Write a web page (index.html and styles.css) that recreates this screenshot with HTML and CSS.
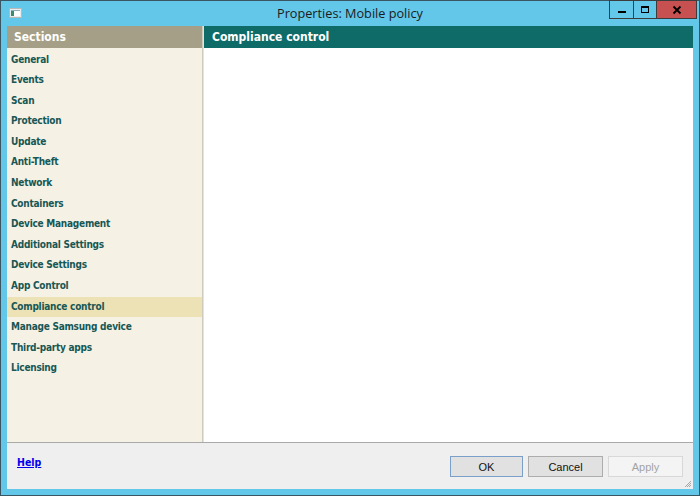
FILE: index.html
```html
<!DOCTYPE html>
<html>
<head>
<meta charset="utf-8">
<link rel="stylesheet" href="styles.css">
</head>
<body>
<div class="window">
  <div class="titlebar">
    <div class="tb-left">
      <svg class="app-icon" width="13" height="10" viewBox="0 0 13 10">
        <rect x="0.5" y="0.5" width="12" height="9" fill="#ececec" stroke="#b9b9b9"/>
        <rect x="2" y="2" width="3" height="6" fill="#3d8b6a"/>
        <rect x="5" y="2" width="6" height="6" fill="#ffffff"/>
        <rect x="2" y="2" width="9" height="1" fill="#8fb0c4"/>
      </svg>
    </div>
    <div class="title">Properties: Mobile policy</div>
    <div class="controls">
      <div class="ctl min"><svg width="10" height="10" viewBox="0 0 10 10"><rect x="1" y="6" width="8" height="2" fill="#000"/></svg></div>
      <div class="ctl max"><svg width="10" height="10" viewBox="0 0 10 10"><rect x="1.5" y="1.5" width="7" height="6" fill="none" stroke="#000" stroke-width="1"/><rect x="1" y="1" width="8" height="2" fill="#000"/></svg></div>
      <div class="ctl close"><svg width="10" height="10" viewBox="0 0 10 10"><path d="M1.5 1.5 L8.5 8.5 M8.5 1.5 L1.5 8.5" stroke="#000" stroke-width="1.8"/></svg></div>
    </div>
  </div>
  <div class="client">
    <div class="panes">
      <div class="sidebar">
        <div class="side-head">Sections</div>
        <ul class="sections">
          <li>General</li>
          <li>Events</li>
          <li>Scan</li>
          <li>Protection</li>
          <li>Update</li>
          <li>Anti-Theft</li>
          <li>Network</li>
          <li>Containers</li>
          <li>Device Management</li>
          <li>Additional Settings</li>
          <li>Device Settings</li>
          <li>App Control</li>
          <li class="selected">Compliance control</li>
          <li>Manage Samsung device</li>
          <li>Third-party apps</li>
          <li>Licensing</li>
        </ul>
      </div>
      <div class="main">
        <div class="main-head">Compliance control</div>
        <div class="main-body"></div>
      </div>
    </div>
    <div class="footer">
      <a class="help" href="#">Help</a>
      <div class="buttons">
        <button class="btn default">OK</button>
        <button class="btn">Cancel</button>
        <button class="btn disabled">Apply</button>
      </div>
      <svg class="grip" width="8" height="8" viewBox="0 0 8 8">
        <path d="M7 1 L1 7 M7 3 L3 7 M7 5 L5 7" stroke="#a8a8a8" stroke-width="1"/>
      </svg>
    </div>
  </div>
</div>
</body>
</html>
```

FILE: styles.css
```css
* { box-sizing: border-box; }
html, body { margin: 0; padding: 0; }
body {
  width: 700px;
  height: 496px;
  overflow: hidden;
  background: #63c7e9;
}
.window {
  width: 700px;
  height: 496px;
  border: 1px solid #3a5663;
  background: #63c7e9;
  padding: 0 6px 6px 6px;
  display: flex;
  flex-direction: column;
}
.titlebar {
  height: 25px;
  display: grid;
  grid-template-columns: 1fr auto 1fr;
  align-items: start;
}
.tb-left {
  padding: 7px 0 0 2px;
}
.app-icon { display: block; }
.title {
  font-family: "Open Sans", "Noto Sans", sans-serif;
  font-size: 12.7px;
  color: #1b1b1b;
  line-height: 24px;
}
.controls {
  justify-self: end;
  display: flex;
  margin-top: -1px;
  margin-right: -4px;
}
.ctl {
  height: 19px;
  border: 1px solid #3c3c3c;
  display: flex;
  align-items: center;
  justify-content: center;
}
.ctl + .ctl { border-left: none; }
.ctl.min { width: 25px; }
.ctl.max { width: 23px; }
.ctl.close { width: 40px; background: #c75050; }
.client {
  flex: 1;
  display: flex;
  flex-direction: column;
  background: #efefef;
}
.panes {
  flex: 1;
  display: flex;
  border-bottom: 1px solid #a9a9a9;
}
.sidebar {
  width: 196px;
  background: #f5f1e4;
  border-right: 1px solid #cfcbbd;
  display: flex;
  flex-direction: column;
}
.side-head, .main-head {
  height: 22px;
  color: #ffffff;
  font-family: "DejaVu Sans", sans-serif;
  font-stretch: condensed;
  font-weight: bold;
  font-size: 12px;
  line-height: 22px;
  padding-left: 7px;
}
.side-head { background: #a59f87; }
.main-head { background: #0e6b68; padding-left: 8px; border-left: 1px solid #e2e2e2; }
.sections {
  list-style: none;
  margin: 0;
  padding: 1.5px 0 0 0;
}
.sections li {
  height: 20.6px;
  line-height: 20.6px;
  padding-left: 4px;
  font-family: "DejaVu Sans", sans-serif;
  font-stretch: condensed;
  font-weight: bold;
  font-size: 10px;
  letter-spacing: -0.25px;
  color: #175755;
  white-space: nowrap;
}
.sections li.selected { background: #ede2b6; }
.main {
  flex: 1;
  display: flex;
  flex-direction: column;
}
.main-body {
  flex: 1;
  background: #ffffff;
  border-left: 1px solid #e2e2e2;
}
.footer {
  height: 46px;
  position: relative;
  display: flex;
  align-items: flex-start;
  justify-content: space-between;
  padding: 0 10px 0 10px;
}
.help {
  margin-top: 13px;
  font-family: "DejaVu Sans", sans-serif;
  font-stretch: condensed;
  font-weight: bold;
  font-size: 10.5px;
  color: #0000ee;
  text-decoration: underline;
}
.buttons {
  display: flex;
  gap: 5px;
  margin-top: 13px;
}
.btn {
  width: 75px;
  height: 21px;
  border: 1px solid #adadad;
  background: #e1e1e1;
  font-family: "Liberation Sans", Arial, sans-serif;
  font-size: 11px;
  color: #111111;
  padding: 0;
  margin: 0;
}
.btn.default { width: 73px; border-color: #7a9fc8; }
.btn.disabled { background: #f4f4f4; border-color: #d8d8d8; color: #a3a3a3; }
.grip {
  position: absolute;
  right: 1px;
  bottom: 1px;
}
```
